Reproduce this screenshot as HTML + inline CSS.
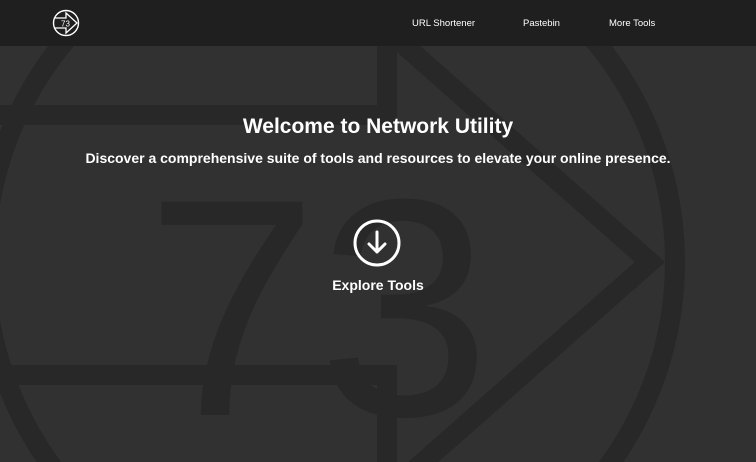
<!DOCTYPE html>
<html style="overflow:hidden;height:462px"><head><style>
body{margin:0;width:756px;height:462px;overflow:hidden;background:#313131;font-family:"Liberation Sans",sans-serif;position:relative}
.hdr{position:absolute;left:0;top:0;width:756px;height:46px;background:#1f1f1f;z-index:2}
.nav{position:absolute;top:18px;color:#fff;font-size:9.5px}
.bg{position:absolute;left:0;top:46px;z-index:0}
.c{position:absolute;left:0;width:756px;text-align:center;color:#fff;font-weight:bold;z-index:1}
</style></head><body>
<div class="hdr">
<svg style="position:absolute;left:52px;top:9px" width="28" height="28" viewBox="0 0 28 28">
<circle cx="14" cy="14" r="12.5" fill="none" stroke="#fff" stroke-width="1.4"/>
<path d="M2 9H14V4L25 14L14 24V19H2" fill="none" stroke="#fff" stroke-width="1.3"/>
<text x="13.5" y="17.5" font-size="8" fill="#fff" text-anchor="middle" font-family="Liberation Sans">73</text>
</svg>
<div class="nav" style="left:412px">URL Shortener</div>
<div class="nav" style="left:523px">Pastebin</div>
<div class="nav" style="left:609px">More Tools</div>
</div>
<svg class="bg" width="756" height="416" viewBox="0 46 756 416">
<g fill="none" stroke="#282828" stroke-width="20">
<circle cx="330" cy="262" r="345"/>
<path d="M-20 115H387V30L650 262L387 494V375H-20"/>
</g>
<text x="318" y="415" font-size="310" fill="#282828" text-anchor="middle" font-family="Liberation Sans">73</text>
</svg>
<div class="c" style="top:115px;font-size:21px">Welcome to Network Utility</div>
<div class="c" style="top:150px;font-size:14px">Discover a comprehensive suite of tools and resources to elevate your online presence.</div>
<svg style="position:absolute;left:353px;top:219px;z-index:1" width="48" height="48" viewBox="0 0 48 48">
<circle cx="24" cy="24" r="22" fill="none" stroke="#fff" stroke-width="3"/>
<path d="M24 13V33M16 25L24 33L32 25" fill="none" stroke="#fff" stroke-width="3" stroke-linecap="round" stroke-linejoin="round"/>
</svg>
<div class="c" style="top:277px;font-size:14px">Explore Tools</div>
</body></html>
